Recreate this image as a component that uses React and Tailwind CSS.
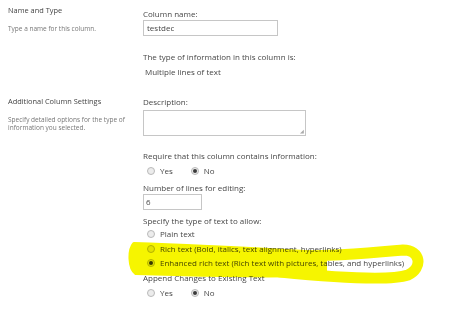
import React from 'react';

const Radio = ({ checked }) => (
  <span className="w-[8px] h-[8px] shrink-0 rounded-full border border-[#b9b9b9] bg-[#ececec] flex items-center justify-center">
    {checked && <span className="w-[4px] h-[4px] rounded-full bg-[#3a3a3a]" />}
  </span>
);

const Option = ({ checked, children, className = '' }) => (
  <label className={`flex items-center h-[12px] pl-[4px] ${className}`}>
    <Radio checked={checked} />
    <span className="ml-[5px] whitespace-nowrap">{children}</span>
  </label>
);

const YesNo = ({ className = '' }) => (
  <div className={`flex items-center h-[12px] ${className}`}>
    <Option checked={false}>Yes</Option>
    <Option checked className="ml-[14px]">No</Option>
  </div>
);

// freehand yellow marker drawn over the two rich-text options
const Highlight = () => (
  <svg
    className="absolute inset-0 pointer-events-none mix-blend-multiply"
    width="474"
    height="314"
    viewBox="0 0 474 314"
  >
    <g fill="#f6f500" stroke="#f6f500" strokeWidth="4" strokeLinejoin="round">
      <path d="M134 244 C 200 246, 270 250, 325 253 L 325 275 C 260 276, 190 275, 136 273 C 129 268, 129 250, 134 244 Z" />
    </g>
    <path
      d="M280 256 C 330 257, 370 253, 403 250 C 421 250, 423 268, 408 275 C 390 281, 340 278, 280 272"
      fill="none"
      stroke="#f6f500"
      strokeWidth="11"
      strokeLinecap="round"
      strokeLinejoin="round"
    />
  </svg>
);

export default function App() {
  return (
    <div className="relative w-[474px] h-[314px] bg-white overflow-hidden font-['Open_Sans',sans-serif] text-[#474747]">
      <div className="flex">
        <div className="w-[143px] pl-[8px] pt-[5px]">
          <div className="text-[7.4px] leading-[10px] text-[#444]">Name and Type</div>
          <div className="text-[6.5px] leading-[8px] mt-[10px] text-[#777]">Type a name for this column.</div>
        </div>
        <div className="flex flex-col text-[8px]">
          <div className="leading-[12px] mt-[8px]">Column name:</div>
          <div className="w-[135px] h-[16px] border border-[#c6c6c6] px-[3px] flex items-center">testdec</div>
          <div className="leading-[12px] mt-[15px]">The type of information in this column is:</div>
          <div className="leading-[12px] mt-[3px] pl-[2px]">Multiple lines of text</div>
        </div>
      </div>

      <div className="flex">
        <div className="w-[143px] pl-[8px] pt-[18px]">
          <div className="text-[7.4px] leading-[10px] text-[#444]">Additional Column Settings</div>
          <div className="text-[6.5px] leading-[8px] mt-[10px] text-[#777]">
            Specify detailed options for the type of
            <br />
            information you selected.
          </div>
        </div>
        <div className="flex flex-col text-[8px]">
          <div className="leading-[12px] mt-[18px]">Description:</div>
          <div className="relative w-[163px] h-[26px] mt-[2px] border border-[#c6c6c6]">
            <span className="absolute right-[1px] bottom-[1px] text-[5px] leading-[5px] text-[#aaa]">◢</span>
          </div>
          <div className="leading-[12px] mt-[14px]">Require that this column contains information:</div>
          <YesNo className="mt-[3px]" />
          <div className="leading-[12px] mt-[5px]">Number of lines for editing:</div>
          <div className="w-[59px] h-[16px] border border-[#c6c6c6] px-[2px] flex items-center">6</div>
          <div className="leading-[12px] mt-[5px]">Specify the type of text to allow:</div>
          <Option className="mt-[1px]">Plain text</Option>
          <Option className="mt-[3px]">Rich text (Bold, italics, text alignment, hyperlinks)</Option>
          <Option checked className="mt-[2px]">
            Enhanced rich text (Rich text with pictures, tables, and hyperlinks)
          </Option>
          <div className="leading-[12px] mt-[3px]">Append Changes to Existing Text</div>
          <YesNo className="mt-[3px]" />
        </div>
      </div>

      <Highlight />
    </div>
  );
}
